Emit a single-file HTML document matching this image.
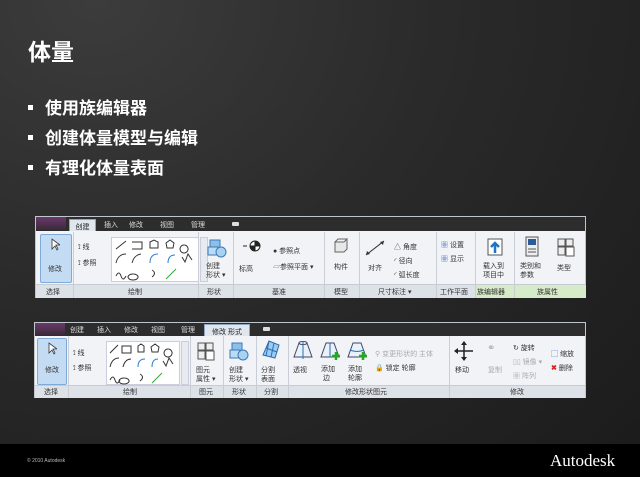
<!DOCTYPE html>
<html><head><meta charset="utf-8"><style>
*{margin:0;padding:0;box-sizing:border-box}
body{width:640px;height:477px;overflow:hidden;position:relative;background:radial-gradient(ellipse at 15% 0%,#3c3c3c 0%,#2a2a2a 45%,#1b1b1b 100%);font-family:"Liberation Sans","Noto Sans CJK SC",sans-serif;}
.a{position:absolute}
h1{position:absolute;left:28px;top:33px;font-size:23px;color:#fff;font-weight:bold;}
ul{position:absolute;left:28px;top:94px;list-style:none;color:#fff;font-size:17px;line-height:30px;font-weight:bold}
ul li:before{content:"";display:inline-block;width:5px;height:5px;background:#fff;margin-right:12px;vertical-align:middle;position:relative;top:-2px}
.foot{position:absolute;left:0;top:444px;width:640px;height:33px;background:#000}
.rb{position:absolute;background:#f1f3f6;border:1px solid #bfc5cc}
.tabs{position:absolute;left:0;top:0;right:0;background:#2d2d2d}
.t{position:absolute;font-size:7px;color:#ddd;top:3px}
.tact{position:absolute;background:#dfe6ee;border:1px solid #8fa5bf;border-bottom:none;color:#222;font-size:7px;text-align:center;padding-top:2px}
.sep{position:absolute;width:1px;background:#c9ced6}
.lrow{position:absolute;left:0;right:0;background:#dde2e8;border-top:1px solid #c6ccd3}
.sel{position:absolute;background:#c3dcf3;border:1px solid #7fa9d6;border-radius:2px}
.s{font-size:7px;color:#333;position:absolute;white-space:nowrap}
.g{color:#aaa}
.grid{position:absolute;background:#fff;border:1px solid #ccd}
</style></head><body>
<h1>体量</h1>
<ul><li>使用族编辑器</li><li>创建体量模型与编辑</li><li>有理化体量表面</li></ul>

<!-- ribbon 1 -->
<div class="rb" style="left:35px;top:216px;width:551px;height:82px">
 <div class="tabs" style="height:14px"></div>
 <div class="a" style="left:0;top:0;width:30px;height:13px;background:linear-gradient(#6a3a6a,#3a2a3a)"></div>
 <div class="tact" style="left:33px;top:2px;width:27px;height:12px">创建</div>
 <div class="t" style="left:68px">插入</div><div class="t" style="left:93px">修改</div><div class="t" style="left:124px">视图</div><div class="t" style="left:155px">管理</div>
 <div class="a" style="left:196px;top:5px;width:7px;height:4px;background:#ddd;border-radius:1px"></div>
 <div class="sel" style="left:4px;top:17px;width:32px;height:49px"></div>
 <svg class="a" style="left:14px;top:21px" width="10" height="14"><path d="M2 1v10l3-3 2 4 1-1-2-4h4z" fill="#fff" stroke="#333" stroke-width=".8"/></svg>
 <div class="s" style="left:12px;top:47px">修改</div>
 <div class="sep" style="left:37px;top:15px;height:66px"></div>
 <div class="s" style="left:42px;top:25px">⟟ 线</div><div class="s" style="left:42px;top:41px">⟟ 参照</div>
 <div class="grid" style="left:75px;top:20px;width:88px;height:45px"></div>
 <svg class="a" style="left:78px;top:22px" width="80" height="42" fill="none" stroke="#333" stroke-width="1"><path d="M2 10L12 2M18 3h10v7H18M36 3l4-2 4 2v6h-8zM52 4l4-3 4 3-1 5h-6zM70 6a4 4 0 1 0 .1 0M2 24q2-9 10-9M18 24q2-8 9-9"/><path d="M36 24q0-9 8-9M54 24q0-8 7-8" stroke="#2f7fd0"/><path d="M68 18l3 5 3-8 4 6M2 37q3-6 5 0t5 0M19 35a5 3 0 1 0 .1 0M38 31q5 3 0 7"/><path d="M52 40l10-10" stroke="#3a3"/></svg>
 <div class="a" style="left:164px;top:20px;width:8px;height:45px;background:#e7eaee;border:1px solid #ccd"></div>
 <div class="sep" style="left:162px;top:15px;height:66px"></div>
 <svg class="a" style="left:170px;top:20px" width="22" height="22"><rect x="4" y="3" width="10" height="9" fill="#8cc0ea" stroke="#3b79b6"/><rect x="2" y="10" width="10" height="8" fill="#bcdcf5" stroke="#3b79b6"/><circle cx="15" cy="15" r="5" fill="#a8d2f2" stroke="#3b79b6"/></svg>
 <div class="s" style="left:170px;top:45px;line-height:9px">创建<br>形状 ▾</div>
 <div class="sep" style="left:197px;top:15px;height:66px"></div>
 <svg class="a" style="left:205px;top:22px" width="22" height="14"><circle cx="14" cy="7" r="5" fill="#fff" stroke="#222"/><path d="M14 2v10M9 7h10" stroke="#222"/><path d="M14 2a5 5 0 0 1 5 5h-5zM14 12a5 5 0 0 1-5-5h5z" fill="#222"/><path d="M2 7h4" stroke="#222"/></svg>
 <div class="s" style="left:203px;top:47px">标高</div>
 <div class="s" style="left:237px;top:29px">● 参照点</div><div class="s" style="left:237px;top:45px"><span style="color:#36c">▱</span>参照平面 ▾</div>
 <div class="sep" style="left:288px;top:15px;height:66px"></div>
 <svg class="a" style="left:296px;top:20px" width="18" height="18"><path d="M3 5h9l3-3v10l-3 3H3z" fill="#e8e8e8" stroke="#666"/><path d="M3 5l3-3h9" fill="none" stroke="#666"/></svg>
 <div class="s" style="left:298px;top:45px">构件</div>
 <div class="sep" style="left:323px;top:15px;height:66px"></div>
 <svg class="a" style="left:328px;top:22px" width="22" height="18"><path d="M2 16L20 2" stroke="#333"/><path d="M2 16l1-4 3 3zM20 2l-1 4-3-3z" fill="#333"/></svg>
 <div class="s" style="left:332px;top:46px">对齐</div>
 <div class="s" style="left:358px;top:25px">△ 角度</div><div class="s" style="left:358px;top:39px">◜ 径向</div><div class="s" style="left:358px;top:53px">◜ 弧长度</div>
 <div class="sep" style="left:400px;top:15px;height:66px"></div>
 <div class="s" style="left:405px;top:23px"><span style="color:#36c">▦</span> 设置</div><div class="s" style="left:405px;top:37px"><span style="color:#36c">▦</span> 显示</div>
 <div class="sep" style="left:439px;top:15px;height:66px"></div>
 <svg class="a" style="left:449px;top:20px" width="20" height="20"><rect x="3" y="2" width="14" height="16" fill="#fff" stroke="#555"/><path d="M10 16V7M6 10l4-4 4 4" stroke="#1f73c8" stroke-width="2.5" fill="none"/></svg>
 <div class="s" style="left:447px;top:45px;line-height:9px">载入到<br>项目中</div>
 <div class="sep" style="left:478px;top:15px;height:66px"></div>
 <svg class="a" style="left:488px;top:19px" width="16" height="22"><rect x="2" y="1" width="12" height="19" fill="#eee" stroke="#555"/><rect x="4" y="3" width="8" height="6" fill="#2a5c9a"/><path d="M4 13h8M4 16h8" stroke="#555"/></svg>
 <div class="s" style="left:484px;top:45px;line-height:9px">类别和<br>参数</div>
 <svg class="a" style="left:520px;top:20px" width="20" height="20"><rect x="2" y="2" width="7" height="7" fill="#eee" stroke="#555"/><rect x="10" y="2" width="7" height="7" fill="#eee" stroke="#555"/><rect x="2" y="10" width="7" height="8" fill="#eee" stroke="#555"/><rect x="10" y="10" width="8" height="9" fill="#fff" stroke="#555"/></svg>
 <div class="s" style="left:521px;top:46px">类型</div>
 <div class="lrow" style="top:67px;height:14px"></div>
 <div class="a" style="left:440px;top:68px;width:110px;height:13px;background:#d6ebc7"></div>
 <div class="sep" style="left:37px;top:67px;height:14px"></div><div class="sep" style="left:162px;top:67px;height:14px"></div><div class="sep" style="left:197px;top:67px;height:14px"></div><div class="sep" style="left:288px;top:67px;height:14px"></div><div class="sep" style="left:323px;top:67px;height:14px"></div><div class="sep" style="left:400px;top:67px;height:14px"></div><div class="sep" style="left:439px;top:67px;height:14px"></div><div class="sep" style="left:478px;top:67px;height:14px"></div>
 <div class="s" style="left:10px;top:70px">选择</div><div class="s" style="left:92px;top:70px">绘制</div><div class="s" style="left:171px;top:70px">形状</div><div class="s" style="left:236px;top:70px">基准</div><div class="s" style="left:298px;top:70px">模型</div><div class="s" style="left:342px;top:70px">尺寸标注 ▾</div><div class="s" style="left:404px;top:70px">工作平面</div><div class="s" style="left:441px;top:70px">族编辑器</div><div class="s" style="left:501px;top:70px">族属性</div>
</div>

<!-- ribbon 2 -->
<div class="rb" style="left:34px;top:322px;width:552px;height:76px">
 <div class="tabs" style="height:13px"></div>
 <div class="a" style="left:0;top:0;width:30px;height:12px;background:linear-gradient(#6a3a6a,#3a2a3a)"></div>
 <div class="t" style="left:35px;top:2px">创建</div><div class="t" style="left:62px;top:2px">插入</div><div class="t" style="left:89px;top:2px">修改</div><div class="t" style="left:116px;top:2px">视图</div><div class="t" style="left:146px;top:2px">管理</div>
 <div class="tact" style="left:169px;top:1px;width:46px;height:12px">修改 形式</div>
 <div class="a" style="left:228px;top:4px;width:7px;height:4px;background:#ddd;border-radius:1px"></div>
 <div class="sel" style="left:2px;top:15px;width:30px;height:47px"></div>
 <svg class="a" style="left:12px;top:19px" width="10" height="14"><path d="M2 1v10l3-3 2 4 1-1-2-4h4z" fill="#fff" stroke="#333" stroke-width=".8"/></svg>
 <div class="s" style="left:10px;top:42px">修改</div>
 <div class="sep" style="left:33px;top:13px;height:62px"></div>
 <div class="s" style="left:38px;top:25px">⟟ 线</div><div class="s" style="left:38px;top:40px">⟟ 参照</div>
 <div class="grid" style="left:71px;top:18px;width:74px;height:44px"></div>
 <svg class="a" style="left:73px;top:20px" width="70" height="42" fill="none" stroke="#333" stroke-width="1"><path d="M2 10L10 2M14 3h9v7h-9zM30 3l3-2 3 2v6h-6zM43 4l4-3 4 3-1 5h-6zM60 6a4 4 0 1 0 .1 0M2 24q2-9 9-9M15 24q2-8 8-8"/><path d="M30 24q0-8 7-8M44 24q0-8 6-8" stroke="#2f7fd0"/><path d="M55 18l3 5 3-8 4 6M2 37q3-6 5 0t5 0M16 35a5 3 0 1 0 .1 0M32 31q5 3 0 7"/><path d="M44 40l10-10" stroke="#3a3"/></svg>
 <div class="a" style="left:146px;top:18px;width:8px;height:44px;background:#e7eaee;border:1px solid #ccd"></div>
 <div class="sep" style="left:155px;top:13px;height:62px"></div>
 <svg class="a" style="left:161px;top:18px" width="20" height="22"><rect x="2" y="2" width="7" height="7" fill="#eee" stroke="#555"/><rect x="10" y="2" width="7" height="7" fill="#eee" stroke="#555"/><rect x="2" y="10" width="7" height="8" fill="#eee" stroke="#555"/><rect x="10" y="10" width="8" height="9" fill="#fff" stroke="#555"/></svg>
 <div class="s" style="left:161px;top:43px;line-height:9px">图元<br>属性 ▾</div>
 <div class="sep" style="left:188px;top:13px;height:62px"></div>
 <svg class="a" style="left:193px;top:17px" width="22" height="22"><rect x="4" y="3" width="10" height="9" fill="#8cc0ea" stroke="#3b79b6"/><rect x="2" y="10" width="10" height="8" fill="#bcdcf5" stroke="#3b79b6"/><circle cx="15" cy="15" r="5" fill="#a8d2f2" stroke="#3b79b6"/></svg>
 <div class="s" style="left:194px;top:43px;line-height:9px">创建<br>形状 ▾</div>
 <div class="sep" style="left:221px;top:13px;height:62px"></div>
 <svg class="a" style="left:226px;top:16px" width="20" height="20"><path d="M2 16l6-14 10 4-4 13z" fill="#9cccf2" stroke="#2b6cb0"/><path d="M5 9l11 4M8 2l-3 15M13 4l-3 14" stroke="#2b6cb0" fill="none"/></svg>
 <div class="s" style="left:226px;top:43px;line-height:9px">分割<br>表面</div>
 <div class="sep" style="left:253px;top:13px;height:62px"></div>
 <svg class="a" style="left:257px;top:17px" width="22" height="20"><path d="M7 3h8l5 14H2z" fill="#e8f2fa" stroke="#446"/><ellipse cx="11" cy="3" rx="4" ry="1.5" fill="#fff" stroke="#446"/><path d="M11 1v18" stroke="#2b6cb0"/></svg>
 <div class="s" style="left:258px;top:42px">透视</div>
 <svg class="a" style="left:284px;top:17px" width="22" height="22"><path d="M7 3h8l5 14H2z" fill="#e8f2fa" stroke="#446"/><path d="M11 3v14" stroke="#2b6cb0"/><path d="M17 12v8M13 16h8" stroke="#2a2" stroke-width="2.5"/></svg>
 <div class="s" style="left:286px;top:42px;line-height:9px">添加<br>&nbsp;边</div>
 <svg class="a" style="left:311px;top:17px" width="22" height="22"><path d="M7 3h8l5 14H2z" fill="#e8f2fa" stroke="#446"/><path d="M4 10q7 3 14 0" stroke="#2b6cb0" fill="none"/><path d="M17 12v8M13 16h8" stroke="#2a2" stroke-width="2.5"/></svg>
 <div class="s" style="left:313px;top:42px;line-height:9px">添加<br>轮廓</div>
 <div class="s g" style="left:340px;top:26px">⚲ 变更形状的 主体</div>
 <div class="s" style="left:340px;top:40px"><span style="color:#36c">🔒</span> 锁定 轮廓</div>
 <div class="sep" style="left:414px;top:13px;height:62px"></div>
 <svg class="a" style="left:419px;top:18px" width="20" height="20"><path d="M10 1v18M1 10h18" stroke="#222" stroke-width="1.5"/><path d="M10 0l-3 4h6zM10 20l-3-4h6zM0 10l4-3v6zM20 10l4-3v6z" fill="#222"/></svg>
 <div class="s" style="left:420px;top:42px">移动</div>
 <div class="s g" style="left:452px;top:20px;font-size:10px">⚭</div>
 <div class="s g" style="left:453px;top:42px">复制</div>
 <div class="s" style="left:478px;top:20px">↻ 旋转</div><div class="s g" style="left:478px;top:34px">▯▯ 镜像 ▾</div><div class="s g" style="left:478px;top:48px">▦ 阵列</div>
 <div class="s" style="left:516px;top:26px"><span style="color:#36c">▢</span> 缩放</div><div class="s" style="left:516px;top:40px"><span style="color:#d22;font-weight:bold">✖</span> 删除</div>
 <div class="lrow" style="top:62px;height:13px"></div>
 <div class="sep" style="left:33px;top:62px;height:13px"></div><div class="sep" style="left:155px;top:62px;height:13px"></div><div class="sep" style="left:188px;top:62px;height:13px"></div><div class="sep" style="left:221px;top:62px;height:13px"></div><div class="sep" style="left:253px;top:62px;height:13px"></div><div class="sep" style="left:414px;top:62px;height:13px"></div>
 <div class="s" style="left:9px;top:64px">选择</div><div class="s" style="left:88px;top:64px">绘制</div><div class="s" style="left:164px;top:64px">图元</div><div class="s" style="left:197px;top:64px">形状</div><div class="s" style="left:229px;top:64px">分割</div><div class="s" style="left:310px;top:64px">修改形状图元</div><div class="s" style="left:475px;top:64px">修改</div>
</div>

<div class="foot">
 <div class="a" style="left:27px;top:14px;font-size:5px;color:#bbb">© 2010 Autodesk</div>
 <div class="a" style="left:550px;top:7px;font-size:17px;color:#fff;font-family:'Liberation Serif',serif">Autodesk</div>
</div>
</body></html>
